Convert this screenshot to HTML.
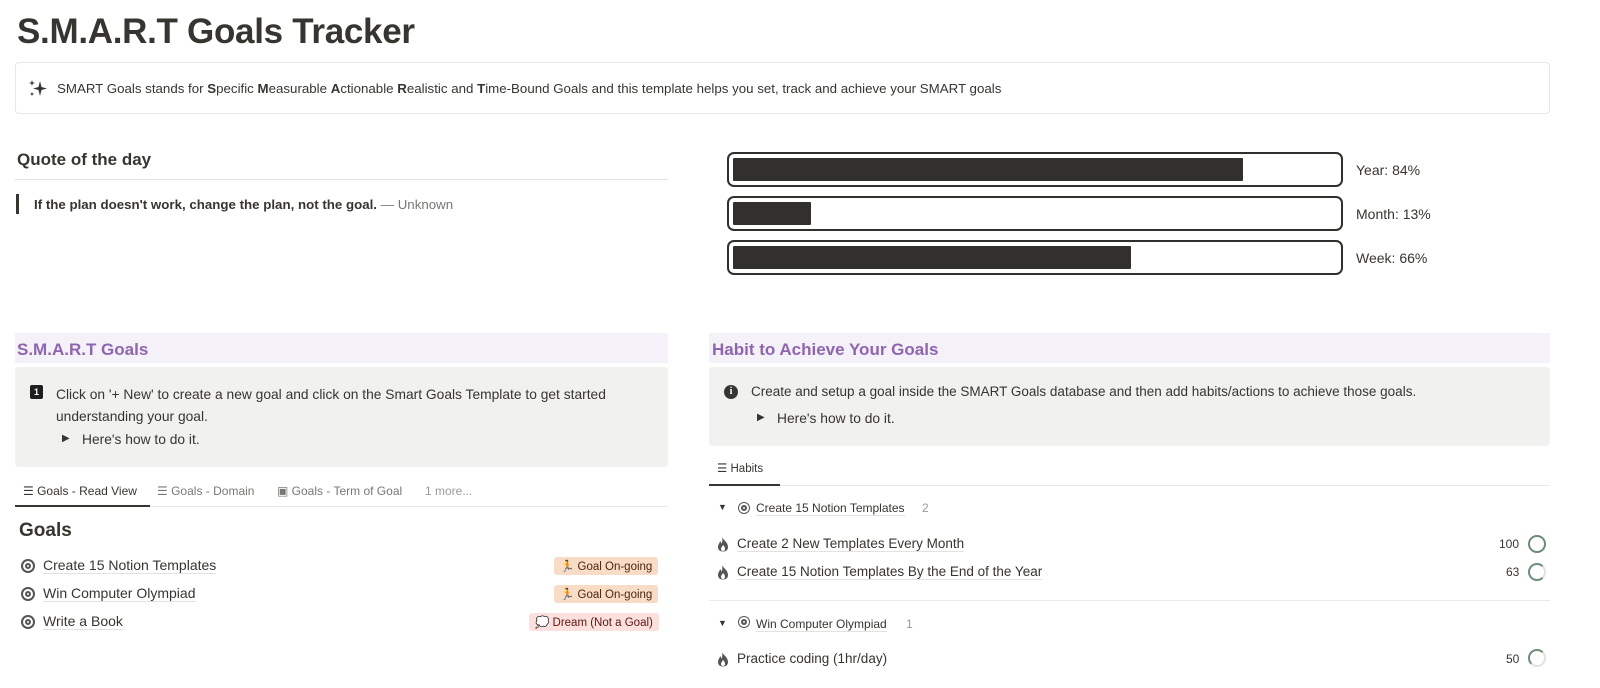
<!DOCTYPE html>
<html><head><meta charset="utf-8"><style>
*{margin:0;padding:0;box-sizing:border-box}
body{width:1600px;height:688px;background:#fff;font-family:"Liberation Sans",sans-serif;color:#37352f;position:relative;overflow:hidden}
.a{position:absolute;white-space:nowrap}
.bar{position:absolute;left:727px;width:616px;height:35px;border:2px solid #32302c;border-radius:7px}
.fill{position:absolute;left:4px;top:4px;height:23px;background:#32302c;border-radius:1px}
.lbl{position:absolute;left:1356px;font-size:14px;color:#37352f}
.u{border-bottom:1px solid #e3e2e0}
.tag{position:absolute;font-size:11.5px;padding:2px 6px;border-radius:3px;color:#49290e}
.ring{position:absolute;left:1528px;width:18px;height:18px;border-radius:50%;border:2.5px solid #6e8c76}
.tgt{position:absolute;border-radius:50%;border:2px solid #555}
.tgt::after{content:"";position:absolute;left:2px;top:2px;right:2px;bottom:2px;border-radius:50%;border:2px solid #555}
</style></head><body>
<div class="a" style="left:17px;top:12px;font-size:35px;font-weight:bold;letter-spacing:-0.3px">S.M.A.R.T Goals Tracker</div>
<div class="a" style="left:15px;top:62px;width:1535px;height:52px;border:1px solid #e6e6e4;border-radius:4px"></div>
<svg class="a" style="left:27px;top:78px" width="22" height="22" viewBox="0 0 22 22"><path d="M13 3 L14.5 9 L20 10.5 L14.5 12 L13 18 L11.5 12 L6 10.5 L11.5 9Z" fill="#37352f"/><path d="M5 2 L5.7 4.3 L8 5 L5.7 5.7 L5 8 L4.3 5.7 L2 5 L4.3 4.3Z" fill="#37352f"/><path d="M5 14 L5.6 15.4 L7 16 L5.6 16.6 L5 18 L4.4 16.6 L3 16 L4.4 15.4Z" fill="#37352f"/></svg>
<div class="a" style="left:57px;top:81px;font-size:13.3px">SMART Goals stands for <b>S</b>pecific <b>M</b>easurable <b>A</b>ctionable <b>R</b>ealistic and <b>T</b>ime-Bound Goals and this template helps you set, track and achieve your SMART goals</div>

<div class="a" style="left:17px;top:150px;font-size:17px;font-weight:bold;color:#37352f">Quote of the day</div>
<div class="a" style="left:15px;top:179px;width:653px;height:1px;background:#e3e2e0"></div>
<div class="a" style="left:16px;top:194px;width:3px;height:20px;background:#37352f"></div>
<div class="a" style="left:34px;top:197px;font-size:13.3px"><b>If the plan doesn't work, change the plan, not the goal.</b> <span style="color:#787774">— Unknown</span></div>

<div class="bar" style="top:152px"><div class="fill" style="width:510px"></div></div>
<div class="lbl" style="top:162px">Year: 84%</div>
<div class="bar" style="top:196px"><div class="fill" style="width:78px"></div></div>
<div class="lbl" style="top:206px">Month: 13%</div>
<div class="bar" style="top:240px"><div class="fill" style="width:398px"></div></div>
<div class="lbl" style="top:250px">Week: 66%</div>

<div class="a" style="left:15px;top:333px;width:653px;height:30px;background:#f4f1f8"></div>
<div class="a" style="left:17px;top:340px;font-size:17px;font-weight:bold;color:#9065b0">S.M.A.R.T Goals</div>
<div class="a" style="left:15px;top:367px;width:653px;height:100px;background:#f1f1ef;border-radius:4px"></div>
<div class="a" style="left:30px;top:385px;width:13px;height:14px;background:#1f1f1f;border-radius:2px;color:#fff;font-size:9px;text-align:center;line-height:14px;font-weight:bold">1</div>
<div class="a" style="left:56px;top:384px;font-size:13.8px;line-height:22px">Click on '+ New' to create a new goal and click on the Smart Goals Template to get started<br>understanding your goal.</div>
<div class="a" style="left:62px;top:433px;font-size:10px">▶</div>
<div class="a" style="left:82px;top:432px;font-size:13.8px">Here's how to do it.</div>

<div class="a" style="left:15px;top:506px;width:653px;height:1px;background:#e9e9e7"></div>
<div class="a" style="left:15px;top:505px;width:135px;height:2px;background:#37352f"></div>
<div class="a" style="left:23px;top:484px;font-size:12px;color:#37352f">☰ Goals - Read View</div>
<div class="a" style="left:157px;top:484px;font-size:12px;color:#787774">☰ Goals - Domain</div>
<div class="a" style="left:277px;top:484px;font-size:12px;color:#787774">▣ Goals - Term of Goal</div>
<div class="a" style="left:425px;top:484px;font-size:12px;color:#9b9a97">1 more...</div>
<div class="a" style="left:19px;top:520px;font-size:19px;font-weight:bold">Goals</div>

<div class="tgt" style="left:21px;top:559px;width:14px;height:14px"></div>
<div class="a u" style="left:43px;top:557px;font-size:14px">Create 15 Notion Templates</div>
<div class="tag" style="left:554px;top:557px;background:#f8dcc6">🏃 Goal On-going</div>
<div class="tgt" style="left:21px;top:587px;width:14px;height:14px"></div>
<div class="a u" style="left:43px;top:585px;font-size:14px">Win Computer Olympiad</div>
<div class="tag" style="left:554px;top:585px;background:#f8dcc6">🏃 Goal On-going</div>
<div class="tgt" style="left:21px;top:615px;width:14px;height:14px"></div>
<div class="a u" style="left:43px;top:613px;font-size:14px">Write a Book</div>
<div class="tag" style="left:529px;top:613px;background:#fbe0dd;color:#5d1715">💭 Dream (Not a Goal)</div>

<div class="a" style="left:709px;top:333px;width:841px;height:30px;background:#f4f1f8"></div>
<div class="a" style="left:712px;top:340px;font-size:17px;font-weight:bold;color:#9065b0">Habit to Achieve Your Goals</div>
<div class="a" style="left:709px;top:367px;width:841px;height:79px;background:#f1f1ef;border-radius:4px"></div>
<div class="a" style="left:724px;top:385px;width:14px;height:14px;background:#37352f;border-radius:50%;color:#fff;font-size:10px;text-align:center;line-height:14px;font-weight:bold;font-family:'Liberation Serif',serif">i</div>
<div class="a" style="left:751px;top:384px;font-size:13.5px">Create and setup a goal inside the SMART Goals database and then add habits/actions to achieve those goals.</div>
<div class="a" style="left:757px;top:412px;font-size:10px">▶</div>
<div class="a" style="left:777px;top:411px;font-size:13.8px">Here's how to do it.</div>

<div class="a" style="left:717px;top:461px;font-size:11.5px">☰ Habits</div>
<div class="a" style="left:709px;top:485px;width:841px;height:1px;background:#e9e9e7"></div>
<div class="a" style="left:709px;top:484px;width:71px;height:2px;background:#37352f"></div>

<div class="a" style="left:718px;top:502px;font-size:9px">▼</div>
<div class="tgt" style="left:738px;top:502px;width:12px;height:12px;border-width:1.5px"></div>
<div class="a u" style="left:756px;top:501px;font-size:12px">Create 15 Notion Templates</div>
<div class="a" style="left:922px;top:501px;font-size:12px;color:#9b9a97">2</div>

<svg class="a" style="left:716px;top:536px" width="14" height="16" viewBox="0 0 14 16"><path d="M6 1 C7 4 12 6 12 11 C12 14 10 15.5 7 15.5 C4 15.5 2 14 2 11 C2 8 4 7 4 5 C5 6 5.5 7 5.5 8 C6.5 6 6.5 3.5 6 1Z" fill="#555"/><path d="M7 9 C8.5 10.5 9 11.5 9 13 C9 14.2 8 15 7 15 C6 15 5 14.2 5 13 C5 11.5 6 11 7 9Z" fill="#fff"/></svg>
<div class="a u" style="left:737px;top:536px;font-size:13.5px">Create 2 New Templates Every Month</div>
<div class="a" style="left:1499px;top:537px;font-size:12px">100</div>
<div class="ring" style="top:535px"></div>
<svg class="a" style="left:716px;top:564px" width="14" height="16" viewBox="0 0 14 16"><path d="M6 1 C7 4 12 6 12 11 C12 14 10 15.5 7 15.5 C4 15.5 2 14 2 11 C2 8 4 7 4 5 C5 6 5.5 7 5.5 8 C6.5 6 6.5 3.5 6 1Z" fill="#555"/><path d="M7 9 C8.5 10.5 9 11.5 9 13 C9 14.2 8 15 7 15 C6 15 5 14.2 5 13 C5 11.5 6 11 7 9Z" fill="#fff"/></svg>
<div class="a u" style="left:737px;top:564px;font-size:13.5px">Create 15 Notion Templates By the End of the Year</div>
<div class="a" style="left:1506px;top:565px;font-size:12px">63</div>
<div class="ring" style="top:563px;border-color:#6e8c76 #e3e2e0 #6e8c76 #6e8c76"></div>
<div class="a" style="left:709px;top:600px;width:841px;height:1px;background:#e9e9e7"></div>

<div class="a" style="left:718px;top:618px;font-size:9px">▼</div>
<div class="tgt" style="left:738px;top:616px;width:12px;height:12px;border-width:1.5px"></div>
<div class="a u" style="left:756px;top:617px;font-size:12px">Win Computer Olympiad</div>
<div class="a" style="left:906px;top:617px;font-size:12px;color:#9b9a97">1</div>

<svg class="a" style="left:716px;top:651px" width="14" height="16" viewBox="0 0 14 16"><path d="M6 1 C7 4 12 6 12 11 C12 14 10 15.5 7 15.5 C4 15.5 2 14 2 11 C2 8 4 7 4 5 C5 6 5.5 7 5.5 8 C6.5 6 6.5 3.5 6 1Z" fill="#555"/><path d="M7 9 C8.5 10.5 9 11.5 9 13 C9 14.2 8 15 7 15 C6 15 5 14.2 5 13 C5 11.5 6 11 7 9Z" fill="#fff"/></svg>
<div class="a" style="left:737px;top:651px;font-size:13.5px">Practice coding (1hr/day)</div>
<div class="a" style="left:1506px;top:652px;font-size:12px">50</div>
<div class="ring" style="top:649px;border-color:#6e8c76 #e3e2e0 #e3e2e0 #6e8c76"></div>
</body></html>
